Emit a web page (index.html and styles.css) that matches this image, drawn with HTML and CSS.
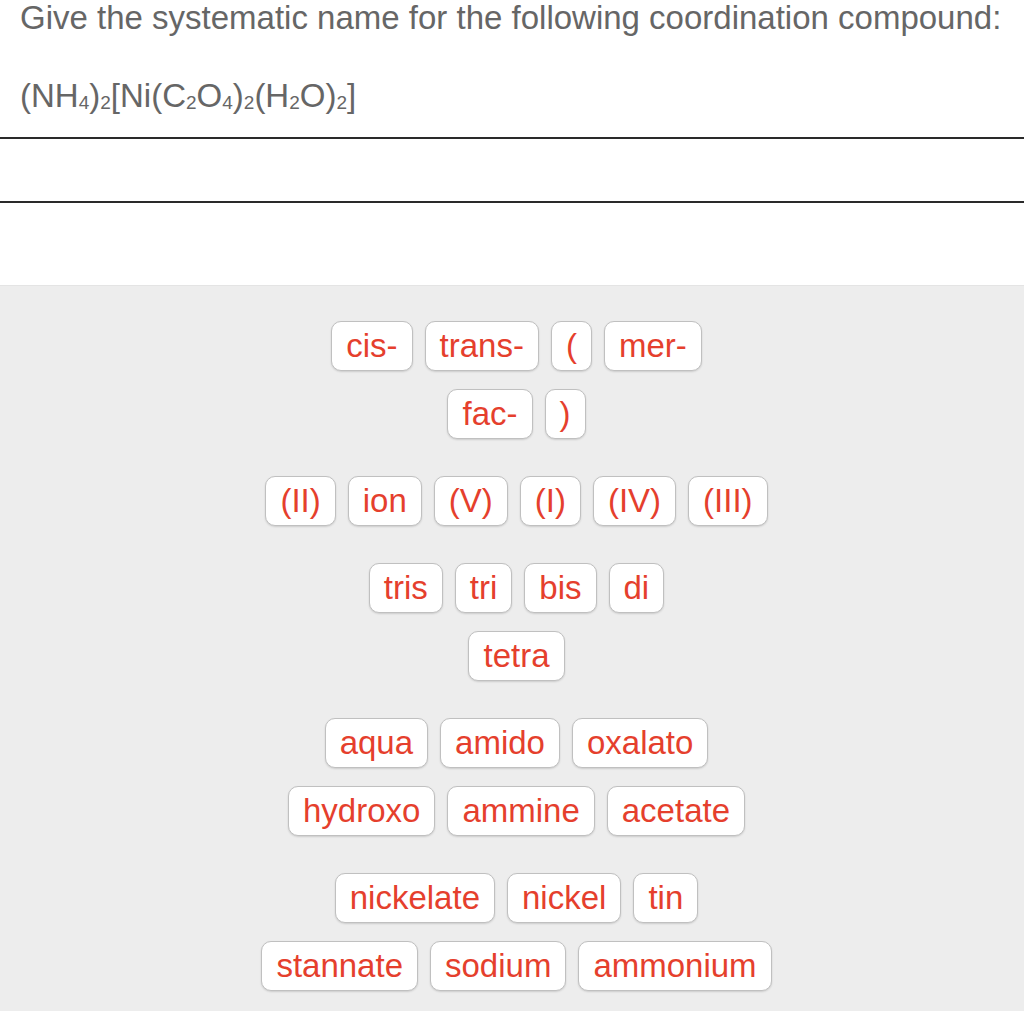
FILE: index.html
```html
<!DOCTYPE html>
<html>
<head>
<meta charset="utf-8">
<link rel="stylesheet" href="styles.css">
</head>
<body>
<div class="question">
  <p class="prompt">Give the systematic name for the following coordination compound:</p>
  <p class="formula">(NH<sub>4</sub>)<sub>2</sub>[Ni(C<sub>2</sub>O<sub>4</sub>)<sub>2</sub>(H<sub>2</sub>O)<sub>2</sub>]</p>
</div>
<div class="answer"></div>
<div class="bank">
  <div class="group">
    <div class="row"><span class="chip">cis-</span><span class="chip">trans-</span><span class="chip">(</span><span class="chip">mer-</span></div>
    <div class="row"><span class="chip">fac-</span><span class="chip">)</span></div>
  </div>
  <div class="group">
    <div class="row"><span class="chip">(II)</span><span class="chip">ion</span><span class="chip">(V)</span><span class="chip">(I)</span><span class="chip">(IV)</span><span class="chip">(III)</span></div>
  </div>
  <div class="group">
    <div class="row"><span class="chip">tris</span><span class="chip">tri</span><span class="chip">bis</span><span class="chip">di</span></div>
    <div class="row"><span class="chip">tetra</span></div>
  </div>
  <div class="group">
    <div class="row"><span class="chip">aqua</span><span class="chip">amido</span><span class="chip">oxalato</span></div>
    <div class="row"><span class="chip">hydroxo</span><span class="chip">ammine</span><span class="chip">acetate</span></div>
  </div>
  <div class="group">
    <div class="row"><span class="chip">nickelate</span><span class="chip">nickel</span><span class="chip">tin</span></div>
    <div class="row"><span class="chip">stannate</span><span class="chip">sodium</span><span class="chip">ammonium</span></div>
  </div>
</div>
</body>
</html>
```
FILE: styles.css
```css
html, body {
  margin: 0;
  padding: 0;
  background: #ffffff;
}
body {
  font-family: "Liberation Sans", Arial, sans-serif;
  font-size: 33px;
  color: #666666;
}
.question {
  padding: 0 0 0 20px;
}
.prompt {
  margin: 0;
  line-height: 35px;
  white-space: nowrap;
}
.formula {
  margin: 43px 0 0 0;
  line-height: 35px;
}
.formula sub {
  font-size: 19px;
  vertical-align: -2px;
  line-height: 0;
}
.answer {
  margin-top: 24px;
  height: 62px;
  border-top: 2px solid #2a2a2a;
  border-bottom: 2px solid #2a2a2a;
}
.bank {
  margin-top: 82px;
  background: #ededed;
  border-top: 1px solid #e4e4e4;
  padding: 35px 0 20px 9px;
  display: flex;
  flex-direction: column;
  gap: 37px;
}
.group {
  display: flex;
  flex-direction: column;
  gap: 18px;
}
.row {
  display: flex;
  justify-content: center;
  gap: 12px;
}
.chip {
  display: block;
  background: #ffffff;
  border: 1px solid #c0c0c0;
  border-radius: 10px;
  box-shadow: 0 1px 2px rgba(0, 0, 0, 0.14);
  color: #e53f2d;
  font-size: 33px;
  line-height: 48px;
  padding: 0 14px;
}
```
